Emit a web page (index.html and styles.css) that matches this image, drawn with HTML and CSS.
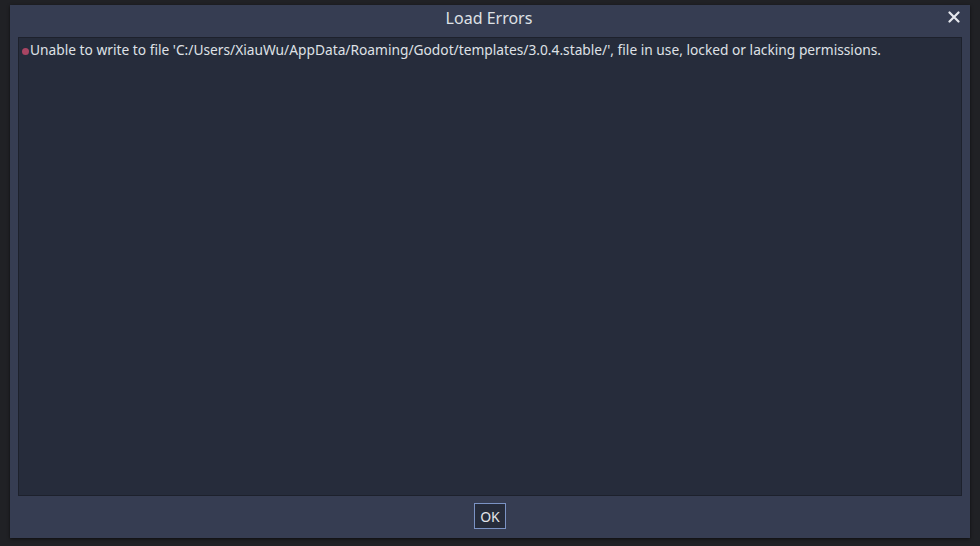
FILE: index.html
```html
<!DOCTYPE html>
<html>
<head>
<meta charset="utf-8">
<link rel="stylesheet" href="styles.css">
</head>
<body>
<div class="screen">
  <div class="dialog">
    <div class="titlebar">
      <span class="title">Load Errors</span>
      <span class="close">
        <svg width="12" height="12" viewBox="0 0 12 12"><path d="M1.5 1.5 L10.5 10.5 M10.5 1.5 L1.5 10.5" stroke="#e6e8ee" stroke-width="2.2" stroke-linecap="round"/></svg>
      </span>
    </div>
    <div class="list">
      <div class="item"><span class="dot"></span>Unable to write to file 'C:/Users/XiauWu/AppData/Roaming/Godot/templates/3.0.4.stable/', file in use, locked or lacking permissions.</div>
    </div>
    <div class="footer">
      <button class="ok">OK</button>
    </div>
  </div>
</div>
</body>
</html>
```
FILE: styles.css
```css
html, body {
  margin: 0;
  padding: 0;
  background: #202125;
  width: 980px;
  height: 546px;
  overflow: hidden;
  font-family: "Noto Sans", "DejaVu Sans", sans-serif;
}
.screen {
  width: 980px;
  height: 546px;
  padding: 5px 10px 0 10px;
  box-sizing: border-box;
}
.dialog {
  width: 960px;
  height: 533px;
  background: #363d52;
  box-shadow: 0 1px 3px rgba(0,0,0,0.6);
  display: flex;
  flex-direction: column;
  box-sizing: border-box;
  padding: 0 8px 9px 8px;
}
.titlebar {
  height: 32px;
  position: relative;
  display: flex;
  align-items: center;
  justify-content: center;
  flex: none;
}
.title {
  color: #dfe1e6;
  font-size: 16px;
  margin-top: -6px;
  margin-left: -2px;
}
.close {
  position: absolute;
  right: 2px;
  top: 6px;
  width: 12px;
  height: 12px;
  display: block;
}
.close svg { display: block; }
.list {
  flex: 1;
  background: #262c3b;
  border: 1px solid #1d212c;
  box-sizing: border-box;
  padding: 3px 3px;
}
.item {
  color: #dfe1e6;
  font-size: 13.75px;
  line-height: 18px;
  display: flex;
  align-items: center;
  white-space: nowrap;
}
.dot {
  width: 7px;
  height: 7px;
  border-radius: 50%;
  background: #a84563;
  margin-right: 1px;
  margin-top: 2px;
}
.footer {
  height: 33px;
  display: flex;
  align-items: flex-end;
  justify-content: center;
  flex: none;
}
.ok {
  width: 32px;
  height: 26px;
  background: #262c3b;
  border: 1px solid #7b93c4;
  color: #e3e5ea;
  font-family: "Noto Sans", "DejaVu Sans", sans-serif;
  font-size: 14px;
  padding: 0;
  margin: 0;
}
```
